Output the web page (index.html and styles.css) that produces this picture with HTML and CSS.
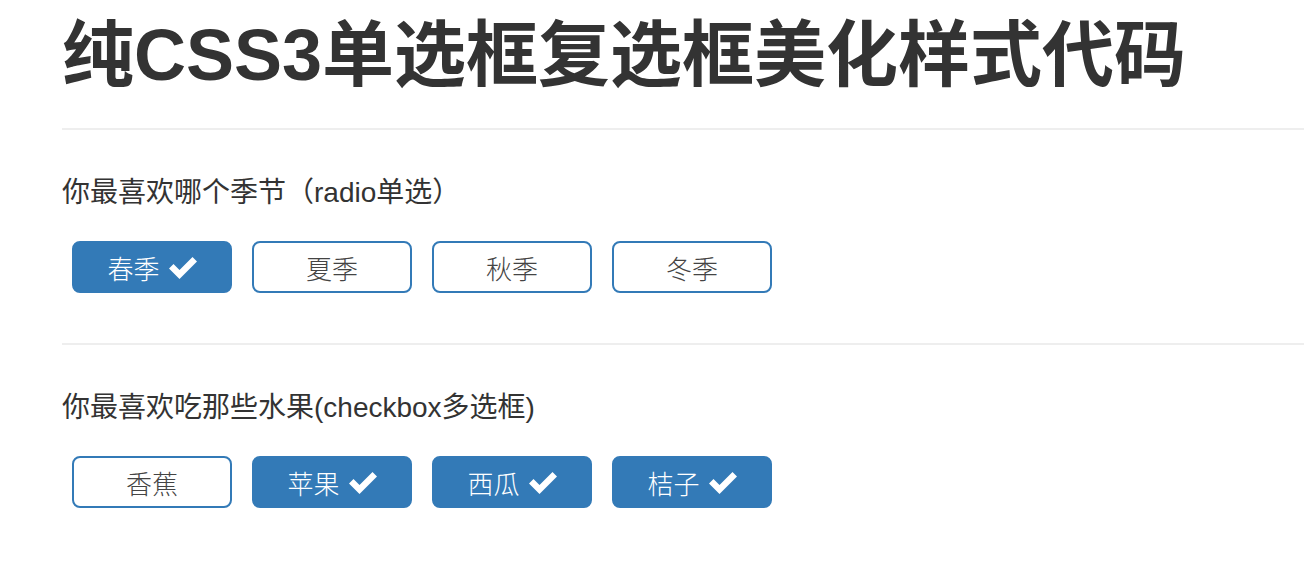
FILE: index.html
```html
<!DOCTYPE html>
<html lang="zh">
<head>
<meta charset="utf-8">
<title>纯CSS3单选框复选框美化样式代码</title>
<link rel="stylesheet" href="styles.css">
</head>
<body>
<div class="page">
  <h1 class="title">纯CSS3单选框复选框美化样式代码</h1>
  <hr class="rule">
  <section class="group">
    <p class="question">你最喜欢哪个季节（radio单选）</p>
    <div class="options">
      <span class="opt checked">春季<svg class="tick" viewBox="0 0 28 24"><path d="M0 13.5 L4.5 9 L10.5 15 L23.5 2 L28 6.5 L10.5 24 Z"/></svg></span>
      <span class="opt">夏季</span>
      <span class="opt">秋季</span>
      <span class="opt">冬季</span>
    </div>
  </section>
  <hr class="rule">
  <section class="group">
    <p class="question">你最喜欢吃那些水果(checkbox多选框)</p>
    <div class="options">
      <span class="opt">香蕉</span>
      <span class="opt checked">苹果<svg class="tick" viewBox="0 0 28 24"><path d="M0 13.5 L4.5 9 L10.5 15 L23.5 2 L28 6.5 L10.5 24 Z"/></svg></span>
      <span class="opt checked">西瓜<svg class="tick" viewBox="0 0 28 24"><path d="M0 13.5 L4.5 9 L10.5 15 L23.5 2 L28 6.5 L10.5 24 Z"/></svg></span>
      <span class="opt checked">桔子<svg class="tick" viewBox="0 0 28 24"><path d="M0 13.5 L4.5 9 L10.5 15 L23.5 2 L28 6.5 L10.5 24 Z"/></svg></span>
    </div>
  </section>
</div>
</body>
</html>
```
FILE: styles.css
```css
html, body {
  margin: 0;
  padding: 0;
  background: #fff;
}
body {
  font-family: "Liberation Sans", "Noto Sans CJK SC", sans-serif;
  color: #333;
}
.page {
  padding-left: 62px;
  overflow: hidden;
}
.title {
  margin: 14px 0 0 0;
  font-size: 72px;
  line-height: 82px;
  font-weight: bold;
  color: #333;
  white-space: nowrap;
}
.rule {
  margin: 32px 0 0 0;
  border: 0;
  border-top: 2px solid #eee;
  height: 0;
}
.group {
  display: flex;
  flex-direction: column;
}
.question {
  margin: 45px 0 0 0;
  font-size: 28px;
  line-height: 36px;
  color: #333;
}
.options {
  display: flex;
  gap: 20px;
  margin: 30px 0 18px 10px;
}
.opt {
  box-sizing: border-box;
  width: 160px;
  height: 52px;
  border: 2px solid #337ab7;
  border-radius: 8px;
  display: flex;
  align-items: center;
  justify-content: center;
  gap: 9px;
  font-size: 26px;
  font-weight: 300;
  color: #444;
  background: #fff;
}
.opt.checked {
  background: #337ab7;
  color: #fff;
}
.tick {
  width: 28px;
  height: 24px;
  fill: #fff;
}
```
